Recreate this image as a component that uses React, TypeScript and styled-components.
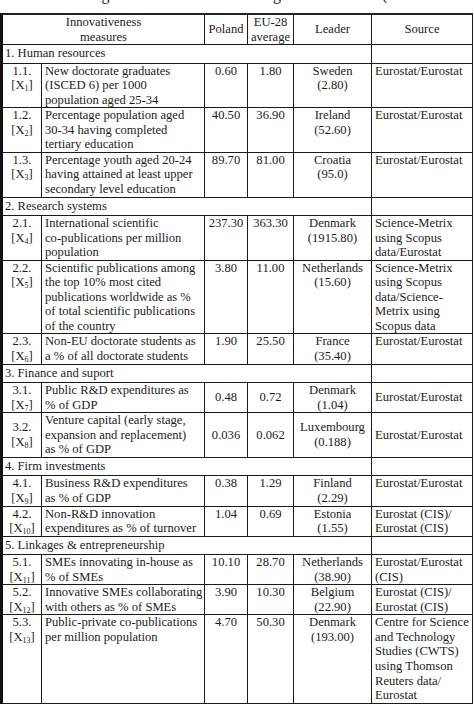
import React from 'react';
import styled, { createGlobalStyle } from 'styled-components';

type Row =
    | { kind: 'section'; title: string }
    | {
          kind: 'item';
          no: string;
          x: string;
          measure: string[];
          pl: string;
          eu: string;
          leader: string;
          value: string;
          source: string[];
          middle?: boolean;
      };

const ROWS: Row[] = [
    { kind: 'section', title: '1. Human resources' },
    {
        kind: 'item',
        no: '1.1.',
        x: '1',
        measure: ['New doctorate graduates', '(ISCED 6) per 1000', 'population aged 25-34'],
        pl: '0.60',
        eu: '1.80',
        leader: 'Sweden',
        value: '(2.80)',
        source: ['Eurostat/Eurostat'],
    },
    {
        kind: 'item',
        no: '1.2.',
        x: '2',
        measure: ['Percentage population aged', '30-34 having completed', 'tertiary education'],
        pl: '40.50',
        eu: '36.90',
        leader: 'Ireland',
        value: '(52.60)',
        source: ['Eurostat/Eurostat'],
    },
    {
        kind: 'item',
        no: '1.3.',
        x: '3',
        measure: ['Percentage youth aged 20-24', 'having attained at least upper', 'secondary level education'],
        pl: '89.70',
        eu: '81.00',
        leader: 'Croatia',
        value: '(95.0)',
        source: ['Eurostat/Eurostat'],
    },
    { kind: 'section', title: '2. Research systems' },
    {
        kind: 'item',
        no: '2.1.',
        x: '4',
        measure: ['International scientific', 'co-publications per million', 'population'],
        pl: '237.30',
        eu: '363.30',
        leader: 'Denmark',
        value: '(1915.80)',
        source: ['Science-Metrix', 'using Scopus', 'data/Eurostat'],
    },
    {
        kind: 'item',
        no: '2.2.',
        x: '5',
        measure: [
            'Scientific publications among',
            'the top 10% most cited',
            'publications worldwide as %',
            'of total scientific publications',
            'of the country',
        ],
        pl: '3.80',
        eu: '11.00',
        leader: 'Netherlands',
        value: '(15.60)',
        source: ['Science-Metrix', 'using Scopus', 'data/Science-', 'Metrix using', 'Scopus data'],
    },
    {
        kind: 'item',
        no: '2.3.',
        x: '6',
        measure: ['Non-EU doctorate students as', 'a % of all doctorate students'],
        pl: '1.90',
        eu: '25.50',
        leader: 'France',
        value: '(35.40)',
        source: ['Eurostat/Eurostat'],
    },
    { kind: 'section', title: '3. Finance and suport' },
    {
        kind: 'item',
        no: '3.1.',
        x: '7',
        measure: ['Public R&D expenditures as', '% of GDP'],
        pl: '0.48',
        eu: '0.72',
        leader: 'Denmark',
        value: '(1.04)',
        source: ['Eurostat/Eurostat'],
        middle: true,
    },
    {
        kind: 'item',
        no: '3.2.',
        x: '8',
        measure: ['Venture capital (early stage,', 'expansion and replacement)', 'as % of GDP'],
        pl: '0.036',
        eu: '0.062',
        leader: 'Luxembourg',
        value: '(0.188)',
        source: ['Eurostat/Eurostat'],
        middle: true,
    },
    { kind: 'section', title: '4. Firm investments' },
    {
        kind: 'item',
        no: '4.1.',
        x: '9',
        measure: ['Business R&D expenditures', 'as % of GDP'],
        pl: '0.38',
        eu: '1.29',
        leader: 'Finland',
        value: '(2.29)',
        source: ['Eurostat/Eurostat'],
    },
    {
        kind: 'item',
        no: '4.2.',
        x: '10',
        measure: ['Non-R&D innovation', 'expenditures as % of turnover'],
        pl: '1.04',
        eu: '0.69',
        leader: 'Estonia',
        value: '(1.55)',
        source: ['Eurostat (CIS)/', 'Eurostat (CIS)'],
    },
    { kind: 'section', title: '5. Linkages & entrepreneurship' },
    {
        kind: 'item',
        no: '5.1.',
        x: '11',
        measure: ['SMEs innovating in-house as', '% of SMEs'],
        pl: '10.10',
        eu: '28.70',
        leader: 'Netherlands',
        value: '(38.90)',
        source: ['Eurostat/Eurostat', '(CIS)'],
    },
    {
        kind: 'item',
        no: '5.2.',
        x: '12',
        measure: ['Innovative SMEs collaborating', 'with others as % of SMEs'],
        pl: '3.90',
        eu: '10.30',
        leader: 'Belgium',
        value: '(22.90)',
        source: ['Eurostat (CIS)/', 'Eurostat (CIS)'],
    },
    {
        kind: 'item',
        no: '5.3.',
        x: '13',
        measure: ['Public-private co-publications', 'per million population'],
        pl: '4.70',
        eu: '50.30',
        leader: 'Denmark',
        value: '(193.00)',
        source: ['Centre for Science', 'and Technology', 'Studies (CWTS)', 'using Thomson', 'Reuters data/', 'Eurostat'],
    },
];

const Lines: React.FC<{ lines: string[] }> = ({ lines }) => (
    <>
        {lines.map((line, i) => (
            <Line key={i}>{line}</Line>
        ))}
    </>
);

const App: React.FC = () => (
    <>
        <GlobalStyle />
        <Page>
            {/* caption is cut off by the top edge of the screenshot: only descenders show */}
            <Caption>
                <CaptionText>Table 2. Ranking of Poland in the EU-28 against the leader (IUS 2015 data)</CaptionText>
            </Caption>
            <Table>
                <colgroup>
                    <col style={{ width: 40 }} />
                    <col style={{ width: 163 }} />
                    <col style={{ width: 43 }} />
                    <col style={{ width: 46 }} />
                    <col style={{ width: 78 }} />
                    <col style={{ width: 101 }} />
                </colgroup>
                <thead>
                    <tr>
                        <HeadCell colSpan={2}>
                            <Lines lines={['Innovativeness', 'measures']} />
                        </HeadCell>
                        <HeadCell>Poland</HeadCell>
                        <HeadCell>
                            <Lines lines={['EU-28', 'average']} />
                        </HeadCell>
                        <HeadCell>Leader</HeadCell>
                        <HeadCell>Source</HeadCell>
                    </tr>
                </thead>
                <tbody>
                    {ROWS.map((row, i) =>
                        row.kind === 'section' ? (
                            <tr key={i}>
                                <SectionCell colSpan={5}>{row.title}</SectionCell>
                                <SectionCell />
                            </tr>
                        ) : (
                            <tr key={i}>
                                <NumCell $middle={row.middle}>
                                    <Line>{row.no}</Line>
                                    <Line>
                                        [X<Sub>{row.x}</Sub>]
                                    </Line>
                                </NumCell>
                                <TextCell $middle={row.middle}>
                                    <Lines lines={row.measure} />
                                </TextCell>
                                <ValueCell $middle={row.middle}>{row.pl}</ValueCell>
                                <ValueCell $middle={row.middle}>{row.eu}</ValueCell>
                                <ValueCell $middle={row.middle}>
                                    <Line>{row.leader}</Line>
                                    <Line>{row.value}</Line>
                                </ValueCell>
                                <TextCell $middle={row.middle}>
                                    <Lines lines={row.source} />
                                </TextCell>
                            </tr>
                        ),
                    )}
                </tbody>
            </Table>
        </Page>
    </>
);

const GlobalStyle = createGlobalStyle`
    html, body {
        margin: 0;
        padding: 0;
        background: #ffffff;
    }
`;

const Page = styled.div`
    width: 474px;
    height: 708px;
    overflow: hidden;
    background: #ffffff;
    color: #1c1c1c;
    font-family: 'Liberation Serif', 'Times New Roman', serif;
    font-size: 12.6px;
    line-height: 14.55px;
`;

const Caption = styled.div`
    display: flow-root;
    height: 7px;
    margin-bottom: 6px;
    overflow: hidden;
    text-align: center;
`;

const CaptionText = styled.div`
    margin-top: -13px;
    font-size: 16px;
    line-height: 16px;
    white-space: nowrap;
`;

const Table = styled.table`
    border-collapse: collapse;
    table-layout: fixed;
    width: 473px;
    border-left: 3px solid #111;
    border-top: 2px solid #222;
`;

const Cell = styled.td<{ $middle?: boolean }>`
    border: 1px solid #1a1a1a;
    padding: 0 3px;
    vertical-align: ${(props) => (props.$middle ? 'middle' : 'top')};
    white-space: nowrap;
    overflow: hidden;
`;

const HeadCell = styled.th`
    border: 1px solid #1a1a1a;
    padding: 0 2px;
    font-weight: normal;
    text-align: center;
    vertical-align: middle;
    white-space: nowrap;
`;

const SectionCell = styled.td`
    border: 1px solid #1a1a1a;
    padding: 1px 2px 2px;
    white-space: nowrap;
    text-align: left;
`;

const NumCell = styled(Cell)`
    text-align: center;
    padding: 0 1px;
`;

const TextCell = styled(Cell)`
    text-align: left;
`;

const ValueCell = styled(Cell)`
    text-align: center;
    padding: 0 1px;
`;

const Line = styled.div`
    display: block;
`;

const Sub = styled.sub`
    font-size: 8px;
    line-height: 0;
    vertical-align: -2px;
`;

export default App;
